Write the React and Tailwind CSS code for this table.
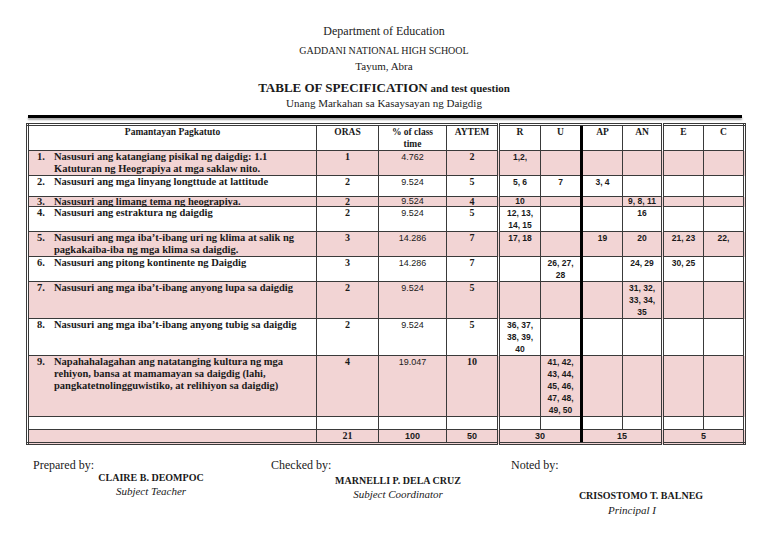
const PINK = "bg-[#f2d4d4]";

const rows = [
  {
    n: "1.",
    text: ["Nasusuri ang katangiang pisikal ng daigdig: 1.1", "Katuturan ng Heograpiya at mga saklaw nito."],
    oras: "1", pct: "4.762", aytem: "2",
    r: ["1,2,"], u: [], ap: [], an: [], e: [], c: [],
    h: "h-[24px]", pink: true,
  },
  {
    n: "2.",
    text: ["Nasusuri ang mga  linyang longttude at lattitude"],
    oras: "2", pct: "9.524", aytem: "5",
    r: ["5, 6"], u: ["7"], ap: ["3, 4"], an: [], e: [], c: [],
    h: "h-[21px]",
  },
  {
    n: "3.",
    text: ["Nasusuri ang limang tema ng heograpiya."],
    oras: "2", pct: "9.524", aytem: "4",
    r: ["10"], u: [], ap: [], an: ["9, 8, 11"], e: [], c: [],
    h: "h-[10px]", pink: true, tight: true,
  },
  {
    n: "4.",
    text: ["Nasusuri ang estraktura ng daigdig"],
    oras: "2", pct: "9.524", aytem: "5",
    r: ["12, 13,", "14, 15"], u: [], ap: [], an: ["16"], e: [], c: [],
    h: "h-[25px]",
  },
  {
    n: "5.",
    text: ["Nasusuri ang mga iba’t-ibang uri ng klima at salik ng", "pagkakaiba-iba ng mga klima sa daigdig."],
    oras: "3", pct: "14.286", aytem: "7",
    r: ["17, 18"], u: [], ap: ["19"], an: ["20"], e: ["21, 23"], c: ["22,"],
    h: "h-[23px]", pink: true,
  },
  {
    n: "6.",
    text: ["Nasusuri ang pitong kontinente ng Daigdig"],
    oras: "3", pct: "14.286", aytem: "7",
    r: [], u: ["26, 27,", "28"], ap: [], an: ["24, 29"], e: ["30, 25"], c: [],
    h: "h-[25px]",
  },
  {
    n: "7.",
    text: ["Nasusuri ang mga iba’t-ibang anyong lupa sa daigdig"],
    oras: "2", pct: "9.524", aytem: "5",
    r: [], u: [], ap: [], an: ["31, 32,", "33, 34,", "35"], e: [], c: [],
    h: "h-[36px]", pink: true,
  },
  {
    n: "8.",
    text: ["Nasusuri ang mga iba’t-ibang anyong tubig sa daigdig"],
    oras: "2", pct: "9.524", aytem: "5",
    r: ["36, 37,", "38, 39,", "40"], u: [], ap: [], an: [], e: [], c: [],
    h: "h-[37px]",
  },
  {
    n: "9.",
    text: [
      "Napahahalagahan ang natatanging kultura ng mga",
      "rehiyon, bansa at mamamayan sa daigdig (lahi,",
      "pangkatetnolingguwistiko, at relihiyon sa daigdig)",
    ],
    oras: "4", pct: "19.047", aytem: "10",
    r: [], u: ["41, 42,", "43, 44,", "45, 46,", "47, 48,", "49, 50"], ap: [], an: [], e: [], c: [],
    h: "h-[61px]", pink: true,
  },
];

const serif = "font-['Liberation_Serif',serif]";
const sans = "font-['Liberation_Sans',sans-serif]";
const cell = "border border-[#3a3a3a] align-top p-0 text-center";
const dbl = "border-l-[3px] [border-left-style:double]";
const thick = "border-l-[3px] border-l-black";

function Lines({ items }) {
  return items.map((t, i) => (
    <div key={i} className="whitespace-nowrap">
      {t}
    </div>
  ));
}

function Header() {
  return (
    <div className={`${serif} text-[#1a1a1a] text-center pt-[23px]`}>
      <div className="text-[12px] leading-[16px]">Department of Education</div>
      <div className="text-[10px] leading-[10px] mt-[7px]">GADDANI NATIONAL HIGH SCHOOL</div>
      <div className="text-[11px] leading-[12px] mt-[4px]">Tayum, Abra</div>
      <div className="mt-[7px] font-bold leading-[16px]">
        <span className="text-[13px]">TABLE OF SPECIFICATION</span>
        <span className="text-[11px]"> and test question</span>
      </div>
      <div className="text-[11px] leading-[14px]">Unang Markahan sa Kasaysayan ng Daigdig</div>
      <div className="mt-[5px] ml-[28px] w-[714px] h-[3px] bg-black shadow-[0_2px_2px_rgba(0,0,0,0.35)]" />
    </div>
  );
}

function SpecTable() {
  return (
    <table className="mt-[5px] ml-[26px] w-[720px] table-fixed border-collapse border-[3px] border-double border-[#3a3a3a] text-[#1a1a1a]">
      <colgroup>
        <col className="w-[289px]" />
        <col className="w-[62px]" />
        <col className="w-[68px]" />
        <col className="w-[52px]" />
        <col className="w-[42px]" />
        <col className="w-[41px]" />
        <col className="w-[41px]" />
        <col className="w-[40px]" />
        <col className="w-[41px]" />
        <col className="w-[41px]" />
      </colgroup>
      <thead>
        <tr className={`h-[24px] bg-white ${serif} font-bold text-[9.5px] leading-[12px]`}>
          <th className={cell}>Pamantayan Pagkatuto</th>
          <th className={cell}>ORAS</th>
          <th className={cell}>
            % of class
            <br />
            time
          </th>
          <th className={cell}>AYTEM</th>
          <th className={`${cell} ${dbl}`}>R</th>
          <th className={cell}>U</th>
          <th className={`${cell} ${thick}`}>AP</th>
          <th className={cell}>AN</th>
          <th className={`${cell} ${dbl}`}>E</th>
          <th className={cell}>C</th>
        </tr>
      </thead>
      <tbody>
        {rows.map((row) => (
          <tr
            key={row.n}
            className={`${row.h} ${row.pink ? PINK : "bg-white"} ${row.tight ? "leading-[9px]" : "leading-[12px]"}`}
          >
            <td className={`${cell} text-left pl-[8px] ${serif} font-bold text-[10.5px]`}>
              <div className="flex">
                <span className="w-[17px] shrink-0">{row.n}</span>
                <div>
                  <Lines items={row.text} />
                </div>
              </div>
            </td>
            <td className={`${cell} ${serif} font-bold text-[10px]`}>{row.oras}</td>
            <td className={`${cell} ${sans} text-[9px]`}>{row.pct}</td>
            <td className={`${cell} ${serif} font-bold text-[10px]`}>{row.aytem}</td>
            <td className={`${cell} ${dbl} ${sans} font-bold text-[8.5px]`}>
              <Lines items={row.r} />
            </td>
            <td className={`${cell} ${sans} font-bold text-[8.5px]`}>
              <Lines items={row.u} />
            </td>
            <td className={`${cell} ${thick} ${sans} font-bold text-[8.5px]`}>
              <Lines items={row.ap} />
            </td>
            <td className={`${cell} ${sans} font-bold text-[8.5px]`}>
              <Lines items={row.an} />
            </td>
            <td className={`${cell} ${dbl} ${sans} font-bold text-[8.5px]`}>
              <Lines items={row.e} />
            </td>
            <td className={`${cell} ${sans} font-bold text-[8.5px]`}>
              <Lines items={row.c} />
            </td>
          </tr>
        ))}
        <tr className="h-[13px] bg-white">
          <td className={cell} />
          <td className={cell} />
          <td className={cell} />
          <td className={cell} />
          <td className={`${cell} ${dbl}`} />
          <td className={cell} />
          <td className={`${cell} ${thick}`} />
          <td className={cell} />
          <td className={`${cell} ${dbl}`} />
          <td className={cell} />
        </tr>
        <tr className={`h-[13px] ${PINK} leading-[12px] font-bold text-[9px]`}>
          <td className={cell} />
          <td className={`${cell} ${serif} text-[10px]`}>21</td>
          <td className={`${cell} ${sans}`}>100</td>
          <td className={`${cell} ${sans}`}>50</td>
          <td colSpan={2} className={`${cell} ${dbl} ${sans}`}>30</td>
          <td colSpan={2} className={`${cell} ${thick} ${sans}`}>15</td>
          <td colSpan={2} className={`${cell} ${dbl} ${sans}`}>5</td>
        </tr>
      </tbody>
    </table>
  );
}

function Signatures() {
  return (
    <div className={`${serif} text-[#1a1a1a] flex pt-[13px]`}>
      <div className="ml-[33px] w-[238px]">
        <div className="text-[12px] leading-[14px]">Prepared by:</div>
        <div className="ml-[61px] w-[114px] text-center">
          <div className="font-bold text-[10px] leading-[12px] whitespace-nowrap">CLAIRE B. DEOMPOC</div>
          <div className="italic text-[11px] leading-[14px]">Subject Teacher</div>
        </div>
      </div>
      <div className="w-[240px]">
        <div className="text-[12px] leading-[14px]">Checked by:</div>
        <div className="ml-[62px] w-[130px] text-center mt-[2px]">
          <div className="font-bold text-[10px] leading-[13px] whitespace-nowrap">MARNELLI P. DELA CRUZ</div>
          <div className="italic text-[11px] leading-[14px]">Subject Coordinator</div>
        </div>
      </div>
      <div>
        <div className="text-[12px] leading-[14px]">Noted by:</div>
        <div className="ml-[65px] w-[130px] text-center mt-[17px]">
          <div className="font-bold text-[10px] leading-[13px] whitespace-nowrap">CRISOSTOMO T. BALNEG</div>
          <div className="italic text-[11px] leading-[16px] -ml-[18px]">Principal I</div>
        </div>
      </div>
    </div>
  );
}

export default function App() {
  return (
    <div className="w-[768px] h-[543px] bg-white overflow-hidden">
      <Header />
      <SpecTable />
      <Signatures />
    </div>
  );
}
